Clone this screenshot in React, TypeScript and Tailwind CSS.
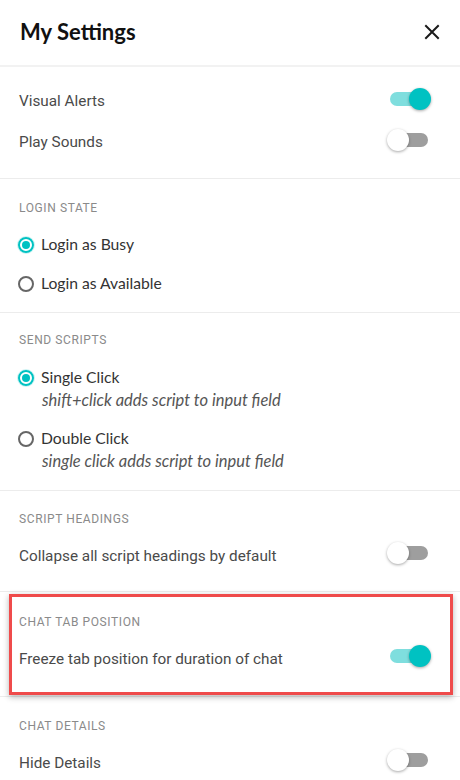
import React, { useState } from 'react'

const roboto = { fontFamily: 'Roboto, "Liberation Sans", sans-serif' }
const lato = { fontFamily: 'Lato, "Liberation Sans", sans-serif' }

function Toggle({ on, onClick }: { on: boolean; onClick: () => void }) {
  return (
    <button onClick={onClick} className="relative w-[44px] h-[22px] shrink-0">
      <span
        className={`absolute left-[3px] top-[4px] w-[38px] h-[14px] rounded-full ${
          on ? 'bg-[#7fdede]' : 'bg-[#9e9e9e]'
        }`}
      />
      <span
        className={`absolute top-0 w-[22px] h-[22px] rounded-full shadow-[0_1px_3px_rgba(0,0,0,0.35)] ${
          on ? 'left-[22px] bg-[#00c2c2]' : 'left-0 bg-white'
        }`}
      />
    </button>
  )
}

function Radio({ checked }: { checked: boolean }) {
  return (
    <span
      className={`w-4 h-4 rounded-full border-2 flex items-center justify-center shrink-0 ${
        checked ? 'border-[#00c2c2] shadow-[0_0_0_1px_rgba(0,194,194,0.2)]' : 'border-[#666]'
      }`}
    >
      {checked && <span className="w-2 h-2 rounded-full bg-[#00c2c2]" />}
    </span>
  )
}

function Label({ children, className = '' }: { children: React.ReactNode; className?: string }) {
  return (
    <div
      style={roboto}
      className={`h-4 leading-4 px-[19px] text-[12px] uppercase tracking-[0.6px] text-[#8a8a8a] ${className}`}
    >
      {children}
    </div>
  )
}

function ToggleRow({ label, on, onClick, className = '' }: any) {
  return (
    <div className={`flex items-center pl-[19px] pr-[29px] ${className}`}>
      <span style={roboto} className="text-[15.3px] text-[#4a4a4a]">
        {label}
      </span>
      <span className="ml-auto">
        <Toggle on={on} onClick={onClick} />
      </span>
    </div>
  )
}

export default function App() {
  const [toggles, setToggles] = useState<Record<string, boolean>>({
    visual: true,
    sounds: false,
    collapse: false,
    freeze: true,
    hide: false,
  })
  const [login, setLogin] = useState('busy')
  const [send, setSend] = useState('single')

  const flip = (key: string) => setToggles(prev => ({ ...prev, [key]: !prev[key] }))

  return (
    <div className="w-[460px] h-[780px] bg-white overflow-hidden">
      {/* header */}
      <div className="h-[67px] flex items-center pl-[20px] pr-[20px] border-b-2 border-[#f2f2f2]">
        <h1 style={lato} className="text-[22px] font-bold text-[#111] pb-[2px]">
          My Settings
        </h1>
        <button className="ml-auto mb-[2px]">
          <svg width="16" height="16" viewBox="0 0 16 16" stroke="#1a1a1a" strokeWidth="2" strokeLinecap="square">
            <path d="M2 2L14 14M14 2L2 14" />
          </svg>
        </button>
      </div>

      {/* alerts */}
      <div className="pt-[14px] pb-[15px] border-b border-[#ececec]">
        <ToggleRow label="Visual Alerts" on={toggles.visual} onClick={() => flip('visual')} className="h-[41px]" />
        <ToggleRow label="Play Sounds" on={toggles.sounds} onClick={() => flip('sounds')} className="h-[41px]" />
      </div>

      {/* login state */}
      <div className="pt-[21px] pb-[9px] border-b border-[#ececec]">
        <Label>Login State</Label>
        <div className="mt-[9px]">
          {[
            ['busy', 'Login as Busy'],
            ['available', 'Login as Available'],
          ].map(([id, text]) => (
            <div
              key={id}
              onClick={() => setLogin(id)}
              className="h-[39px] flex items-center gap-[7px] pl-[18px] cursor-pointer"
            >
              <Radio checked={login === id} />
              <span style={lato} className="text-[15.7px] text-[#333]">
                {text}
              </span>
            </div>
          ))}
        </div>
      </div>

      {/* send scripts */}
      <div className="pt-[19px] pb-[18px] border-b border-[#ececec]">
        <Label>Send Scripts</Label>
        <div className="mt-[19px] flex flex-col gap-[17px]">
          {[
            ['single', 'Single Click', 'shift+click adds script to input field'],
            ['double', 'Double Click', 'single click adds script to input field'],
          ].map(([id, text, hint]) => (
            <div key={id} onClick={() => setSend(id)} className="cursor-pointer">
              <div className="h-[22px] flex items-center gap-[7px] pl-[18px]">
                <Radio checked={send === id} />
                <span style={lato} className="text-[15.7px] text-[#333]">
                  {text}
                </span>
              </div>
              <div style={lato} className="h-[22px] leading-[22px] pl-[42px] text-[16.5px] italic text-[#555]">
                {hint}
              </div>
            </div>
          ))}
        </div>
      </div>

      {/* script headings */}
      <div className="pt-[20px] pb-[15px] border-b border-[#ececec]">
        <Label>Script Headings</Label>
        <ToggleRow
          label="Collapse all script headings by default"
          on={toggles.collapse}
          onClick={() => flip('collapse')}
          className="h-[40px] mt-[9px]"
        />
      </div>

      {/* chat tab position - highlighted */}
      <div className="relative pt-[22px] pb-[17px] border-b border-[#ececec]">
        <Label>Chat Tab Position</Label>
        <ToggleRow
          label="Freeze tab position for duration of chat"
          on={toggles.freeze}
          onClick={() => flip('freeze')}
          className="h-[40px] mt-[9px]"
        />
        <div className="absolute left-[9px] top-[2px] w-[444px] h-[101px] border-[3px] border-[#ef4b4b] shadow-[0_2px_6px_rgba(0,0,0,0.3)] pointer-events-none" />
      </div>

      {/* chat details */}
      <div className="pt-[21px]">
        <Label>Chat Details</Label>
        <ToggleRow label="Hide Details" on={toggles.hide} onClick={() => flip('hide')} className="h-[40px] mt-[9px]" />
      </div>
    </div>
  )
}
